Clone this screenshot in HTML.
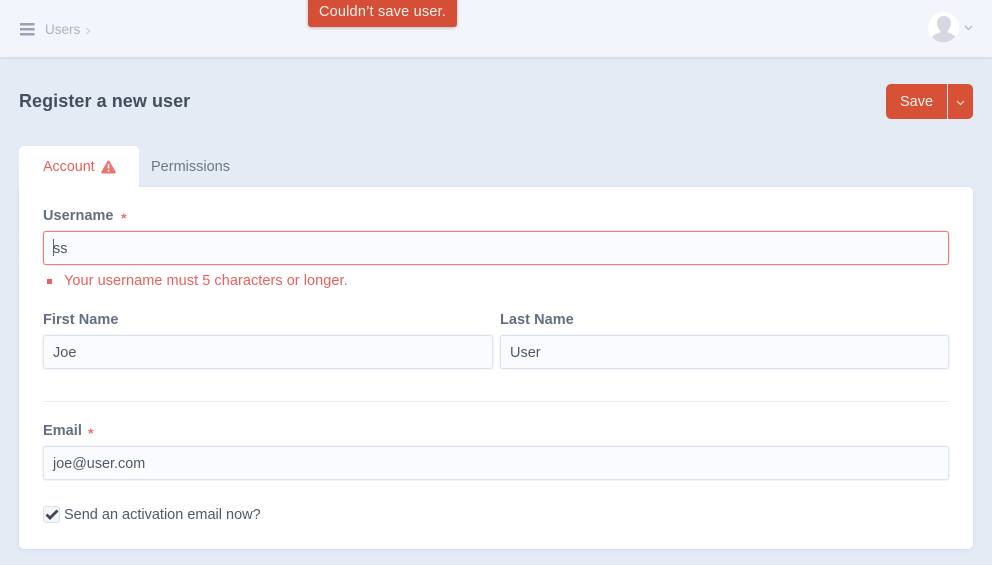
<!DOCTYPE html>
<html><head><meta charset="utf-8">
<style>
*{box-sizing:border-box}
html,body{margin:0;padding:0}
body{width:992px;height:565px;overflow:hidden;position:relative;background:#e4ebf5;font-family:"Liberation Sans",sans-serif;font-size:14.5px;color:#4a5568}
.a{position:absolute;white-space:nowrap}
.lbl{font-weight:bold;color:#646e7f;font-size:14.5px;line-height:20px;letter-spacing:.05px}
.inp{position:absolute;height:34px;background:#f9fbfe;border:1px solid #dce3ee;border-radius:3px;line-height:34px;padding-left:9px;color:#4f5968;font-size:14.5px;box-shadow:0 0 1.5px #c9d3e3}
.star{color:#e9716f;font-size:14px;font-weight:bold}
</style></head><body>
<div class="a" style="left:0;top:0;width:992px;height:57px;background:#f2f6fc;box-shadow:0 1px 3px rgba(160,175,200,.35)"></div>
<svg class="a" style="left:20px;top:23px" width="15" height="13"><path d="M0 1.3H14.500M0 6.300H14.500M0 11.300H14.500" stroke="#9aa3b1" stroke-width="2.500"/></svg>
<div class="a" style="left:45px;top:21px;line-height:18px;font-size:13.500px;color:#a9b2c0">Users</div>
<svg class="a" style="left:85px;top:27px" width="6" height="8"><path d="M1.500 1L4.500 4L1.500 7" fill="none" stroke="#c0c7d2" stroke-width="1"/></svg>
<div class="a" style="left:308px;top:-4px;width:149px;height:31px;background:#d54f36;border-radius:3px;box-shadow:0 1px 3px rgba(90,60,60,.35);color:#fdf3f0;text-align:center;line-height:33px;font-size:14.500px;letter-spacing:.2px">Couldn’t save user.</div>
<svg class="a" style="left:928px;top:12px" width="32" height="32" viewBox="0 0 32 32"><defs><clipPath id="c"><circle cx="15.500" cy="15.500" r="15"/></clipPath></defs><circle cx="15.500" cy="15.500" r="15.500" fill="#fff"/><g clip-path="url(#c)" fill="#d5d8df"><path d="M16 4c4.200 0 7 3 7 7 0 3.200-1.500 6-3.200 7.300v2.200c2.800 1.300 6.700 2.300 8 4.500V32H4v-7c1.300-2.200 5.400-3.200 8.200-4.500v-2.200C10.500 17 9 14.200 9 11c0-4 2.800-7 7-7z"/></g></svg>
<svg class="a" style="left:964px;top:25px" width="9" height="6"><path d="M1 1L4.500 4.500L8 1" fill="none" stroke="#b3bac6" stroke-width="1.300"/></svg>
<div class="a" style="left:19px;top:90px;font-weight:bold;font-size:18px;line-height:22px;color:#444e5c;letter-spacing:.06px">Register a new user</div>
<div class="a" style="left:886px;top:84px;width:61px;height:35px;background:#d75137;border-radius:5px 0 0 5px;color:#fdf1ed;text-align:center;line-height:37px;font-size:14.500px;font-weight:500">Save</div>
<div class="a" style="left:948px;top:84px;width:25px;height:35px;background:#d75137;border-radius:0 5px 5px 0"></div>
<svg class="a" style="left:956px;top:100px" width="9" height="6"><path d="M1 1L4.500 4.500L8 1" fill="none" stroke="#fbe3dc" stroke-width="1.200"/></svg>
<div class="a" style="left:19px;top:187px;width:954px;height:362px;background:#fff;border-radius:0 5px 5px 5px;box-shadow:0 1px 4px rgba(170,185,210,.3)"></div>
<div class="a" style="left:19px;top:146px;width:120px;height:42px;background:#fff;border-radius:5px 5px 0 0"></div>
<div class="a" style="left:43px;top:158px;line-height:19px;color:#e9605e;font-size:14.300px">Account</div>
<svg class="a" style="left:100.500px;top:160px" width="15" height="14" viewBox="0 0 15 14"><path d="M7.500.5c.5 0 .9.300 1.100.7l6 10.600c.5.800-.1 1.700-1 1.700H1.400c-.9 0-1.500-.9-1-1.700l6-10.600c.2-.4.600-.7 1.100-.7z" fill="#ea7472"/><path d="M7.500 4v4.500M7.500 10v1.600" stroke="#fff" stroke-width="1.500"/></svg>
<div class="a" style="left:151px;top:158px;line-height:19px;color:#6d7787;font-size:14.500px">Permissions</div>
<div class="a lbl" style="left:43px;top:206px">Username</div>
<div class="a star" style="left:121px;top:211px;line-height:14px">*</div>
<div class="inp" style="left:43px;top:231px;width:906px;border-color:#e9827f;box-shadow:0 0 1.500px #ee9a97">ss</div>
<div class="a" style="left:53px;top:239px;width:1px;height:17px;background:#5a6472"></div>
<div class="a" style="left:47px;top:279px;width:5px;height:5px;background:#e9605e"></div>
<div class="a" style="left:64px;top:272px;line-height:19px;color:#e9605e;font-size:14.500px;letter-spacing:.05px">Your username must 5 characters or longer.</div>
<div class="a lbl" style="left:43px;top:310px">First Name</div>
<div class="inp" style="left:43px;top:335px;width:450px">Joe</div>
<div class="a lbl" style="left:500px;top:310px">Last Name</div>
<div class="inp" style="left:500px;top:335px;width:449px">User</div>
<div class="a" style="left:43px;top:401px;width:906px;height:1px;background:#e9edf3"></div>
<div class="a lbl" style="left:43px;top:421px">Email</div>
<div class="a star" style="left:88px;top:426px;line-height:14px">*</div>
<div class="inp" style="left:43px;top:446px;width:906px;font-size:14.400px">joe@user.com</div>
<div class="a" style="left:43px;top:506px;width:17px;height:17px;background:#f4f6fb;border:1px solid #d9e0ec;border-radius:3px"></div>
<svg class="a" style="left:45px;top:508px" width="14" height="13" viewBox="0 0 14 13"><path d="M1.500 6.500L5 10L12.500 2.500" fill="none" stroke="#3f4856" stroke-width="2.800"/></svg>
<div class="a" style="left:64px;top:506px;line-height:19px;color:#4f5968;font-size:14.500px">Send an activation email now?</div>
</body></html>
